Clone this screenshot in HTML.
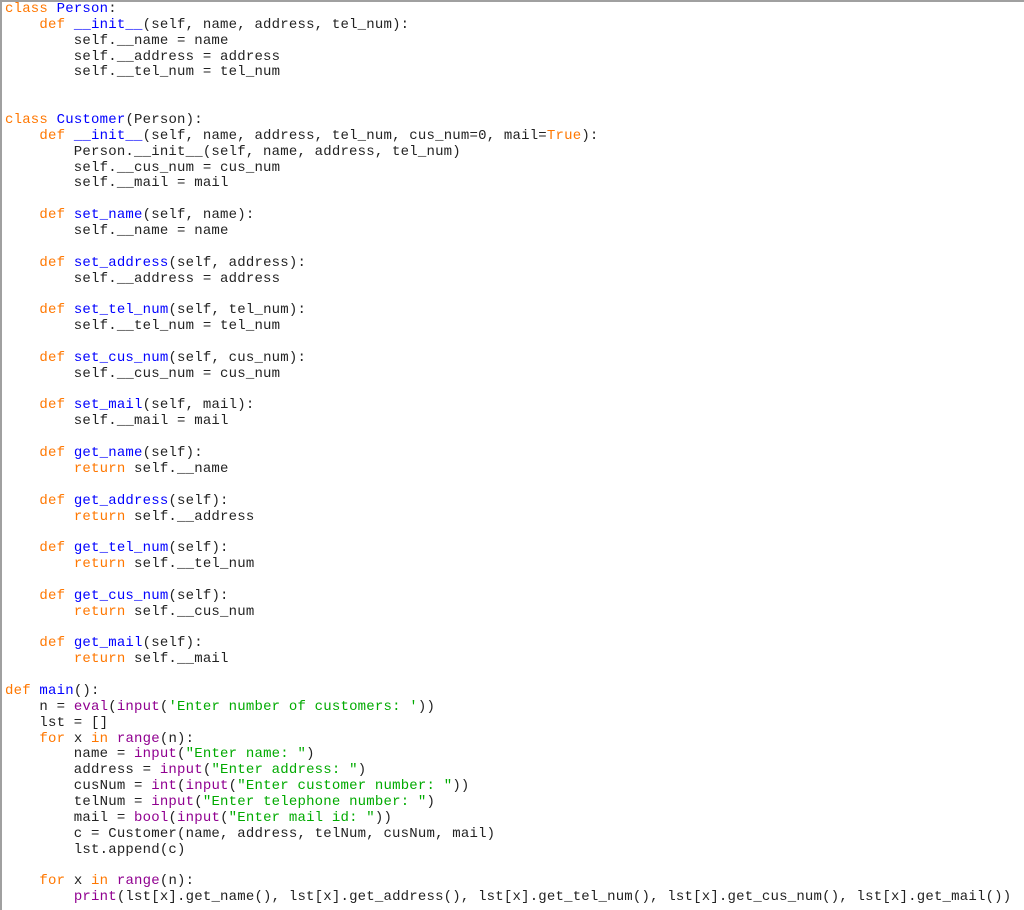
<!DOCTYPE html>
<html><head><meta charset="utf-8"><style>
html,body{margin:0;padding:0;background:#fff;}
body{width:1024px;height:910px;overflow:hidden;position:relative;}
.frame{position:absolute;left:0;top:0;width:1024px;height:910px;border-top:2px solid #a0a0a0;border-left:2px solid #a0a0a0;box-sizing:border-box;}
pre{position:absolute;left:5px;top:2px;margin:0;font-family:"Liberation Mono","Courier New",monospace;font-size:14px;letter-spacing:0.2px;line-height:15.86px;color:#222;white-space:pre;}
.k{color:#ff7700}.f{color:#0000ff}.b{color:#900090}.s{color:#00aa00}
</style></head><body><div class="frame"></div>
<pre><span class="k">class</span> <span class="f">Person</span>:
    <span class="k">def</span> <span class="f">__init__</span>(self, name, address, tel_num):
        self.__name = name
        self.__address = address
        self.__tel_num = tel_num


<span class="k">class</span> <span class="f">Customer</span>(Person):
    <span class="k">def</span> <span class="f">__init__</span>(self, name, address, tel_num, cus_num=0, mail=<span class="k">True</span>):
        Person.__init__(self, name, address, tel_num)
        self.__cus_num = cus_num
        self.__mail = mail

    <span class="k">def</span> <span class="f">set_name</span>(self, name):
        self.__name = name

    <span class="k">def</span> <span class="f">set_address</span>(self, address):
        self.__address = address

    <span class="k">def</span> <span class="f">set_tel_num</span>(self, tel_num):
        self.__tel_num = tel_num

    <span class="k">def</span> <span class="f">set_cus_num</span>(self, cus_num):
        self.__cus_num = cus_num

    <span class="k">def</span> <span class="f">set_mail</span>(self, mail):
        self.__mail = mail

    <span class="k">def</span> <span class="f">get_name</span>(self):
        <span class="k">return</span> self.__name

    <span class="k">def</span> <span class="f">get_address</span>(self):
        <span class="k">return</span> self.__address

    <span class="k">def</span> <span class="f">get_tel_num</span>(self):
        <span class="k">return</span> self.__tel_num

    <span class="k">def</span> <span class="f">get_cus_num</span>(self):
        <span class="k">return</span> self.__cus_num

    <span class="k">def</span> <span class="f">get_mail</span>(self):
        <span class="k">return</span> self.__mail

<span class="k">def</span> <span class="f">main</span>():
    n = <span class="b">eval</span>(<span class="b">input</span>(<span class="s">'Enter number of customers: '</span>))
    lst = []
    <span class="k">for</span> x <span class="k">in</span> <span class="b">range</span>(n):
        name = <span class="b">input</span>(<span class="s">"Enter name: "</span>)
        address = <span class="b">input</span>(<span class="s">"Enter address: "</span>)
        cusNum = <span class="b">int</span>(<span class="b">input</span>(<span class="s">"Enter customer number: "</span>))
        telNum = <span class="b">input</span>(<span class="s">"Enter telephone number: "</span>)
        mail = <span class="b">bool</span>(<span class="b">input</span>(<span class="s">"Enter mail id: "</span>))
        c = Customer(name, address, telNum, cusNum, mail)
        lst.append(c)

    <span class="k">for</span> x <span class="k">in</span> <span class="b">range</span>(n):
        <span class="b">print</span>(lst[x].get_name(), lst[x].get_address(), lst[x].get_tel_num(), lst[x].get_cus_num(), lst[x].get_mail())
</pre>
</body></html>
